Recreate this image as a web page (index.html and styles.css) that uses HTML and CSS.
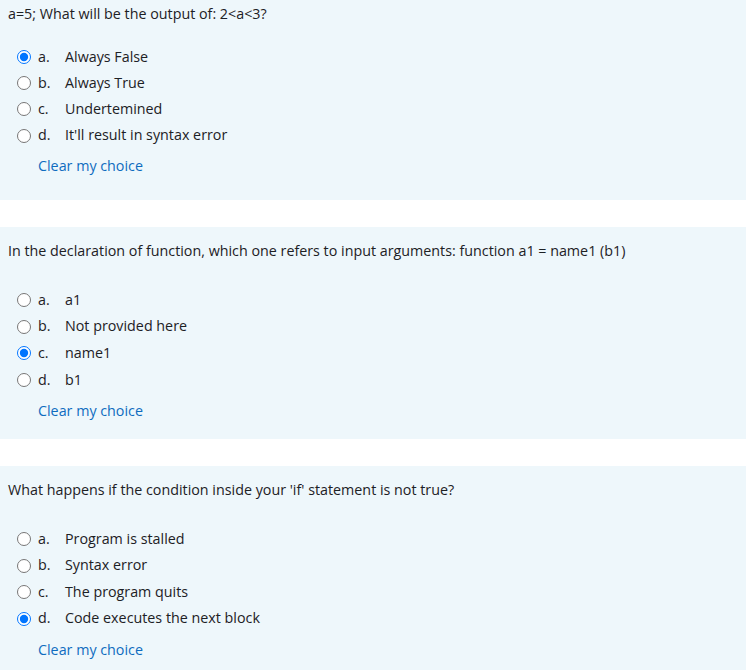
FILE: index.html
```html
<!DOCTYPE html>
<html lang="en">
<head>
  <meta charset="UTF-8" />
  <title>Quiz</title>
  <link rel="stylesheet" href="styles.css">
</head>
<body>

<div class="que que-first">
  <div class="qtext">a=5; What will be the output of: 2&lt;a&lt;3?</div>
  <div class="answer">
    <label class="option"><input type="radio" name="q1" checked><span class="num">a.</span>Always False</label>
    <label class="option"><input type="radio" name="q1"><span class="num">b.</span>Always True</label>
    <label class="option"><input type="radio" name="q1"><span class="num">c.</span>Undertemined</label>
    <label class="option"><input type="radio" name="q1"><span class="num">d.</span>It'll result in syntax error</label>
  </div>
  <a href="#" class="clear">Clear my choice</a>
</div>

<div class="que">
  <div class="qtext">In the declaration of function, which one refers to input arguments: function a1 = name1 (b1)</div>
  <div class="answer">
    <label class="option"><input type="radio" name="q2"><span class="num">a.</span>a1</label>
    <label class="option"><input type="radio" name="q2"><span class="num">b.</span>Not provided here</label>
    <label class="option"><input type="radio" name="q2" checked><span class="num">c.</span>name1</label>
    <label class="option"><input type="radio" name="q2"><span class="num">d.</span>b1</label>
  </div>
  <a href="#" class="clear">Clear my choice</a>
</div>

<div class="que">
  <div class="qtext">What happens if the condition inside your 'if' statement is not true?</div>
  <div class="answer">
    <label class="option"><input type="radio" name="q3"><span class="num">a.</span>Program is stalled</label>
    <label class="option"><input type="radio" name="q3"><span class="num">b.</span>Syntax error</label>
    <label class="option"><input type="radio" name="q3"><span class="num">c.</span>The program quits</label>
    <label class="option"><input type="radio" name="q3" checked><span class="num">d.</span>Code executes the next block</label>
  </div>
  <a href="#" class="clear">Clear my choice</a>
</div>

</body>
</html>
```

FILE: styles.css
```css
body {
  font-family: 'Open Sans', sans-serif;
  font-size: 14.3px;
  color: #1d2125;
  background-color: #fff;
  margin: 0;
}

.que {
  background-color: #eef7fb;
  padding: 13px 8px 17px;
  margin-bottom: 27px;
}

.que-first {
  margin-top: -9px;
  padding-top: 12px;
  padding-bottom: 23px;
}

.qtext {
  line-height: 22.5px;
  margin-bottom: 24px;
}

.que-first .qtext {
  margin-bottom: 18.5px;
}

.answer {
  padding-left: 9px;
}

.option {
  display: flex;
  align-items: center;
  height: 26.6px;
  line-height: 22.5px;
}

.que-first .option {
  height: 26.2px;
}

.option input {
  width: 14px;
  height: 14px;
  margin: 0 7px 0 0;
}

.num {
  width: 27px;
}

.clear {
  display: inline-block;
  margin: 6.5px 0 0 30px;
  line-height: 22.5px;
  color: #0f6cbf;
  text-decoration: none;
}

.que-first .clear {
  margin-top: 6px;
}
```
